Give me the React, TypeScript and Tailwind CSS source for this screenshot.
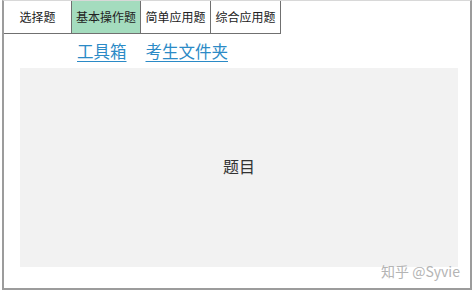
import React from "react";

const tabs = [
  { label: "选择题", w: "w-[68px]" },
  { label: "基本操作题", w: "w-[69px]" },
  { label: "简单应用题", w: "w-[70px]" },
  { label: "综合应用题", w: "w-[70px]" },
];

export default function App() {
  const active = 1;

  return (
    <div
      className="relative w-[474px] h-[292px] bg-white overflow-hidden"
      style={{ fontFamily: '"Microsoft YaHei", "Noto Sans CJK SC", sans-serif' }}
    >
      <div className="ml-[2px] w-[470px] h-[290px] border-l-2 border-r-2 border-b-2 border-t border-[#9c9c9c] border-t-[#d8d8d8] flex flex-col">
        {/* 题型标签 */}
        <div className="flex h-[33px] shrink-0">
          {tabs.map((t, i) => (
            <div
              key={t.label}
              className={
                "h-full flex items-center justify-center text-[12px] text-[#222] border-r border-b border-[#707070] " +
                t.w +
                " " +
                (i === active ? "bg-[#a4dcbe]" : "bg-white")
              }
            >
              {t.label}
            </div>
          ))}
        </div>

        {/* 链接 */}
        <div className="h-[34px] shrink-0 flex items-center gap-[19px] pl-[73px] text-[16.5px] text-[#2b8ac6]">
          <a className="underline underline-offset-[3px] cursor-pointer leading-none">工具箱</a>
          <a className="underline underline-offset-[3px] cursor-pointer leading-none">考生文件夹</a>
        </div>

        {/* 题目区域 */}
        <div className="ml-[16px] mr-[12px] h-[199px] pb-[4px] bg-[#f2f2f2] flex items-center justify-center text-[16px] text-[#333]">
          题目
        </div>
      </div>

      <div className="absolute left-[381px] top-[261px] text-[14px] text-[#b4b4b4] whitespace-nowrap">
        知乎 @Syvie
      </div>
    </div>
  );
}
